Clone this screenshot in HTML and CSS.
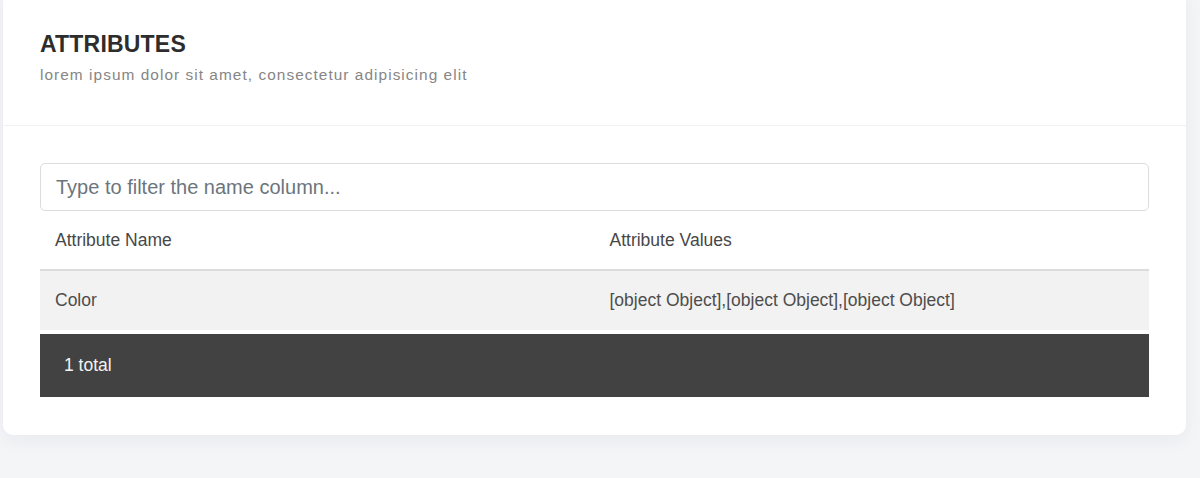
FILE: index.html
```html
<!DOCTYPE html>
<html>
<head>
<meta charset="utf-8">
<link rel="stylesheet" href="styles.css">
</head>
<body>
<div class="card">
  <div class="card-header">
    <h2 class="title">ATTRIBUTES</h2>
    <p class="subtitle">lorem ipsum dolor sit amet, consectetur adipisicing elit</p>
  </div>
  <div class="card-body">
    <input class="filter" type="text" placeholder="Type to filter the name column...">
    <table class="table">
      <thead>
        <tr><th>Attribute Name</th><th>Attribute Values</th></tr>
      </thead>
      <tbody>
        <tr class="row"><td>Color</td><td>[object Object],[object Object],[object Object]</td></tr>
      </tbody>
    </table>
    <div class="footer">1 total</div>
  </div>
</div>
</body>
</html>
```
FILE: styles.css
```css
html, body {
  margin: 0;
  padding: 0;
}
body {
  background: #f4f5f7;
  font-family: "Liberation Sans", Arial, sans-serif;
  height: 478px;
  overflow: hidden;
}
.card {
  margin: -10px 14px 0 3px;
  background: #ffffff;
  border-radius: 0 0 10px 10px;
  box-shadow: 0 6px 18px rgba(30, 40, 80, 0.05);
}
.card-header {
  padding: 41px 37px 41px;
  border-bottom: 1px solid #f2f2f4;
}
.title {
  margin: 0;
  font-size: 23px;
  font-weight: 700;
  color: #2d2d2d;
  letter-spacing: 0.2px;
  line-height: 26px;
}
.subtitle {
  margin: 9px 0 0;
  font-size: 15.4px;
  color: #868686;
  letter-spacing: 1.05px;
  line-height: 18px;
}
.card-body {
  padding: 37px 37px 38px;
}
.filter {
  display: block;
  box-sizing: border-box;
  width: 100%;
  height: 48px;
  margin: 0;
  padding: 0 15px;
  border: 1px solid #dcdcdc;
  border-radius: 5px;
  font-family: "Liberation Sans", Arial, sans-serif;
  font-size: 20px;
  color: #495057;
  outline: none;
}
.filter::placeholder {
  color: #6c757d;
}
.table {
  width: 100%;
  border-collapse: collapse;
  table-layout: fixed;
  font-size: 17.5px;
}
.table th {
  text-align: left;
  font-weight: 400;
  color: #474747;
  padding: 0 15px;
  height: 58px;
  border-bottom: 2px solid #dcdcdc;
}
.table td {
  padding: 0 15px;
  height: 59px;
  color: #4d4d4d;
  background: #f2f2f2;
}
.footer {
  margin-top: 4px;
  background: #424242;
  color: #f2f2f2;
  font-size: 17.5px;
  height: 63px;
  line-height: 63px;
  padding: 0 24px;
}
```
